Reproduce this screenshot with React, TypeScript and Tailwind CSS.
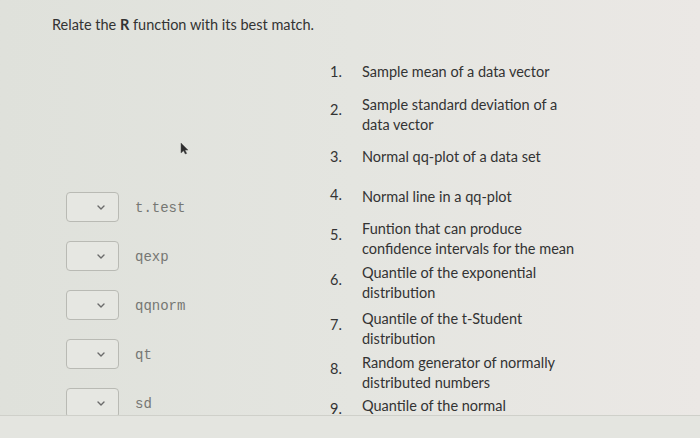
import React from 'react';

const options = ['t.test', 'qexp', 'qqnorm', 'qt', 'sd'];

const matches: { n: string; lines: string[]; mt: string; numPad: string }[] = [
  { n: '1.', lines: ['Sample mean of a data vector'], mt: 'mt-0', numPad: 'pt-0' },
  { n: '2.', lines: ['Sample standard deviation of a', 'data vector'], mt: 'mt-[13px]', numPad: 'pt-[5px]' },
  { n: '3.', lines: ['Normal qq-plot of a data set'], mt: 'mt-[12px]', numPad: 'pt-0' },
  { n: '4.', lines: ['Normal line in a qq-plot'], mt: 'mt-[20px]', numPad: 'pt-0 -mt-[2px]' },
  { n: '5.', lines: ['Funtion that can produce', 'confidence intervals for the mean'], mt: 'mt-[12px]', numPad: 'pt-[6px]' },
  { n: '6.', lines: ['Quantile of the exponential', 'distribution'], mt: 'mt-[4px]', numPad: 'pt-[7px]' },
  { n: '7.', lines: ['Quantile of the t-Student', 'distribution'], mt: 'mt-[6px]', numPad: 'pt-[6px]' },
  { n: '8.', lines: ['Random generator of normally', 'distributed numbers'], mt: 'mt-[4px]', numPad: 'pt-[6px]' },
  { n: '9.', lines: ['Quantile of the normal'], mt: 'mt-[3px]', numPad: 'pt-[3px]' },
];

const Chevron = () => (
  <svg width="8" height="5" viewBox="0 0 8 5" fill="none">
    <path d="M1 1l3 3 3-3" stroke="#6b6b6b" strokeWidth="1.4" strokeLinecap="round" strokeLinejoin="round" />
  </svg>
);

const SelectRow: React.FC<{ label: string }> = ({ label }) => (
  <div className="flex items-center gap-4 h-[30px] mb-[19px]">
    <div className="w-[53px] h-[30px] rounded-[4px] border border-[#b9bab4] bg-[#e6e7e2] flex items-center justify-end pr-[13px] shrink-0">
      <Chevron />
    </div>
    <span className="font-['Liberation_Mono',monospace] text-[14px] text-[#767773] pt-[2px]">{label}</span>
  </div>
);

export default function App() {
  return (
    <div className="w-[700px] h-[438px] overflow-hidden bg-gradient-to-r from-[#dfe1db] via-[#e4e5e0] to-[#ebe8e5] font-['Lato','Liberation_Sans',sans-serif] text-[#333333] relative">
      <div className="h-[416px] overflow-hidden border-b border-[#cfd0ca]">
        <div className="pl-[52px] pt-[15px] h-[35px] text-[14.5px] leading-[20px]">
          Relate the <span className="font-bold">R</span> function with its best match.
        </div>

        <div className="flex">
          <div className="w-[330px] pl-[66px] pt-[157px] shrink-0">
            {options.map((o) => (
              <SelectRow key={o} label={o} />
            ))}
          </div>

          <div className="pt-[27px] text-[14.5px] leading-[20px]">
            {matches.map((m) => (
              <div key={m.n} className={`flex ${m.mt}`}>
                <div className={`w-[32px] shrink-0 ${m.numPad}`}>{m.n}</div>
                <div>
                  {m.lines.map((l) => (
                    <div key={l}>{l}</div>
                  ))}
                </div>
              </div>
            ))}
          </div>
        </div>
      </div>
      <div className="h-[22px] bg-[#e4e5e0]" />

      {/* mouse pointer */}
      <svg className="absolute left-[180px] top-[142px]" width="9" height="13" viewBox="0 0 9 13">
        <path d="M1 1v10l2.5-2.3L5.3 12l1.4-.6-1.7-3.3H8z" fill="#2d2d2d" stroke="#555" strokeWidth="0.5" />
      </svg>
    </div>
  );
}
